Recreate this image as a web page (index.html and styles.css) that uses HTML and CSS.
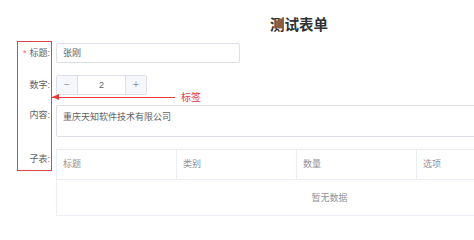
FILE: index.html
```html
<!DOCTYPE html>
<html lang="zh-CN">
<head>
<meta charset="utf-8">
<title>测试表单</title>
<link rel="stylesheet" href="styles.css">
</head>
<body>
<div class="page">
  <h1 class="title">测试表单</h1>
  <div class="form">
    <div class="row row-title">
      <div class="lbl"><span class="req">*</span>标题:</div>
      <div class="ctl"><div class="input">张刚</div></div>
    </div>
    <div class="row row-num">
      <div class="lbl">数字:</div>
      <div class="ctl">
        <div class="number">
          <span class="btn minus">−</span>
          <span class="val">2</span>
          <span class="btn plus">+</span>
        </div>
      </div>
    </div>
    <div class="row row-text">
      <div class="lbl">内容:</div>
      <div class="ctl"><div class="textarea">重庆天知软件技术有限公司</div></div>
    </div>
    <div class="row row-table">
      <div class="lbl">子表:</div>
      <div class="ctl">
        <div class="table">
          <div class="thead">
            <div class="th">标题</div>
            <div class="th">类别</div>
            <div class="th">数量</div>
            <div class="th">选项</div>
            <div class="th last"></div>
          </div>
          <div class="tbody">暂无数据</div>
        </div>
      </div>
    </div>
  </div>
  <div class="anno-box"></div>
  <div class="anno-arrow"><span class="head"></span></div>
  <div class="anno-text">标签</div>
</div>
</body>
</html>
```

FILE: styles.css
```css
html, body {
  margin: 0;
  padding: 0;
  background: #ffffff;
  overflow: hidden;
}
body {
  font-family: "Liberation Sans", "Noto Sans CJK SC", sans-serif;
  color: #606266;
}
.page {
  position: relative;
  width: 474px;
  height: 220px;
  overflow: hidden;
}
.title {
  margin: 0;
  padding-top: 18px;
  padding-left: 124px;
  font-size: 14.5px;
  line-height: 15px;
  font-weight: bold;
  color: #303133;
  text-align: center;
}
.form {
  margin-top: 10px;
}
.row {
  display: flex;
  align-items: flex-start;
}
.row-num { margin-top: 12px; }
.row-text { margin-top: 10px; }
.row-table { margin-top: 12px; }
.lbl {
  box-sizing: border-box;
  width: 51px;
  flex: none;
  padding-right: 1px;
  text-align: right;
  font-size: 9px;
  line-height: 20px;
  color: #606266;
}
.req {
  color: #f56c6c;
  margin-right: 3px;
}
.ctl {
  margin-left: 5px;
}
.input {
  box-sizing: border-box;
  width: 184px;
  height: 20px;
  border: 1px solid #dcdfe6;
  border-radius: 2px;
  padding-left: 6px;
  font-size: 9px;
  line-height: 18px;
  color: #606266;
}
.number {
  box-sizing: border-box;
  display: flex;
  width: 91px;
  height: 20px;
  border: 1px solid #dcdfe6;
  border-radius: 2px;
  font-size: 10px;
  line-height: 18px;
}
.btn {
  width: 20px;
  background: #f5f7fa;
  color: #909399;
  text-align: center;
}
.minus { border-right: 1px solid #dcdfe6; }
.plus { border-left: 1px solid #dcdfe6; }
.val {
  flex: 1;
  text-align: center;
  font-size: 9px;
  color: #606266;
}
.textarea {
  box-sizing: border-box;
  width: 547px;
  height: 32px;
  border: 1px solid #dcdfe6;
  border-radius: 2px;
  padding: 4px 6px;
  font-size: 9px;
  line-height: 14px;
  color: #606266;
}
.table {
  box-sizing: border-box;
  width: 547px;
  height: 67px;
  border: 1px solid #ebeef5;
  font-size: 9px;
  color: #909399;
}
.thead {
  display: flex;
  height: 29px;
  border-bottom: 1px solid #ebeef5;
}
.th {
  box-sizing: border-box;
  width: 120px;
  flex: none;
  padding-left: 6px;
  line-height: 29px;
  border-right: 1px solid #ebeef5;
}
.th.last {
  flex: 1;
  border-right: 0;
}
.tbody {
  height: 36px;
  line-height: 36px;
  text-align: center;
}
.anno-box {
  position: absolute;
  left: 17px;
  top: 41px;
  width: 33px;
  height: 128px;
  border: 1px solid #e0454a;
}
.anno-arrow {
  position: absolute;
  left: 52px;
  top: 97px;
  width: 123px;
  height: 1px;
  background: #e63b3f;
}
.anno-arrow .head {
  position: absolute;
  left: 0;
  top: -3px;
  width: 0;
  height: 0;
  border-top: 3.5px solid transparent;
  border-bottom: 3.5px solid transparent;
  border-right: 7px solid #e63b3f;
}
.anno-text {
  position: absolute;
  left: 181px;
  top: 92px;
  font-size: 10px;
  line-height: 12px;
  color: #e63b3f;
}
```
